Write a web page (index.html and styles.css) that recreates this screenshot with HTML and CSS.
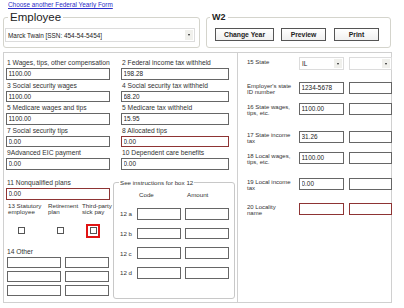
FILE: index.html
```html
<!DOCTYPE html>
<html>
<head>
<meta charset="utf-8">
<link rel="stylesheet" href="styles.css">
</head>
<body>
<div class="page">
  <div class="top"><a class="top-link" href="#">Choose another Federal Yearly Form</a></div>
  <div class="header">
    <fieldset class="group emp">
      <legend class="emp-legend">Employee</legend>
      <div class="select emp-select"><span class="select-text">Marck Twain [SSN: 454-54-5454]</span><span class="select-btn"><span class="caret"></span></span></div>
    </fieldset>
    <fieldset class="group w2">
      <legend class="w2-legend">W2</legend>
      <div class="btn-row">
        <button class="btn btn-year">Change Year</button>
        <button class="btn btn-sm">Preview</button>
        <button class="btn btn-sm btn-print">Print</button>
      </div>
    </fieldset>
  </div>
  <div class="main">
    <div class="panel left-panel">
      <div class="fields">
        <div class="field"><div class="lbl">1 Wages, tips, other compensation</div><input class="inp" value="1100.00"></div>
        <div class="field"><div class="lbl">2 Federal income tax withheld</div><input class="inp" value="198.28"></div>
        <div class="field"><div class="lbl">3 Social security wages</div><input class="inp" value="1100.00"></div>
        <div class="field"><div class="lbl">4 Social security tax withheld</div><input class="inp" value="68.20"></div>
        <div class="field"><div class="lbl">5 Medicare wages and tips</div><input class="inp" value="1100.00"></div>
        <div class="field"><div class="lbl">5 Medicare tax withheld</div><input class="inp" value="15.95"></div>
        <div class="field"><div class="lbl">7 Social security tips</div><input class="inp" value="0.00"></div>
        <div class="field"><div class="lbl">8 Allocated tips</div><input class="inp inp-red" value="0.00"></div>
        <div class="field"><div class="lbl">9Advanced EIC payment</div><input class="inp" value="0.00"></div>
        <div class="field"><div class="lbl">10 Dependent care benefits</div><input class="inp" value="0.00"></div>
      </div>
      <div class="lower">
        <div class="lower-left">
          <div class="lbl">11 Nonqualified plans</div>
          <input class="inp inp-red" value="0.00">
          <div class="checks">
            <div class="check-col"><div class="check-lbl">13 Statutory<br>employee</div><div class="check-cell cell-a"><span class="cb"></span></div></div>
            <div class="check-col"><div class="check-lbl">Retirement<br>plan</div><div class="check-cell cell-b"><span class="cb"></span></div></div>
            <div class="check-col"><div class="check-lbl">Third-party<br>sick pay</div><div class="check-cell cell-c cell-red"><span class="cb"></span></div></div>
          </div>
          <div class="lbl other-lbl">14 Other</div>
          <div class="other-grid">
            <input class="inp"><input class="inp">
            <input class="inp"><input class="inp">
            <input class="inp"><input class="inp">
          </div>
        </div>
        <fieldset class="box12">
          <legend class="box12-legend">See instructions for box 12</legend>
          <div class="b12-head"><span class="b12-spacer"></span><span class="b12-h">Code</span><span class="b12-h b12-h2">Amount</span></div>
          <div class="b12-row b12-first"><span class="b12-lbl">12 a</span><input class="inp b12-inp"><input class="inp b12-inp b12-inp2"></div>
          <div class="b12-row"><span class="b12-lbl">12 b</span><input class="inp b12-inp"><input class="inp b12-inp b12-inp2"></div>
          <div class="b12-row"><span class="b12-lbl">12 c</span><input class="inp b12-inp"><input class="inp b12-inp b12-inp2"></div>
          <div class="b12-row"><span class="b12-lbl">12 d</span><input class="inp b12-inp"><input class="inp b12-inp b12-inp2"></div>
        </fieldset>
      </div>
    </div>
    <div class="panel right-panel">
      <div class="state-grid">
        <div class="slbl slbl-state">15 State</div>
        <div class="select st-select"><span class="select-text">IL</span><span class="select-btn"><span class="caret"></span></span></div>
        <div class="select st-select"><span class="select-text"></span><span class="select-btn"><span class="caret"></span></span></div>

        <div class="slbl">Employer's state<br>ID number</div>
        <input class="inp" value="1234-5678"><input class="inp">

        <div class="slbl">16 State wages,<br>tips, etc.</div>
        <input class="inp" value="1100.00"><input class="inp">

        <div class="slbl">17 State income<br>tax</div>
        <input class="inp" value="31.26"><input class="inp">

        <div class="slbl">18 Local wages,<br>tips, etc.</div>
        <input class="inp" value="1100.00"><input class="inp">

        <div class="slbl">19 Local income<br>tax</div>
        <input class="inp" value="0.00"><input class="inp">

        <div class="slbl">20 Locality<br>name</div>
        <input class="inp inp-red"><input class="inp inp-red">
      </div>
    </div>
  </div>
</div>
</body>
</html>
```

FILE: styles.css
```css
body {
  margin: 0;
  background: #fff;
  font-family: "Liberation Sans", Arial, sans-serif;
  color: #333;
}

.page {
  width: 404px;
  height: 308px;
  overflow: hidden;
}

.top {
  height: 11px;
  box-sizing: border-box;
  padding: 1px 0 0 8px;
  line-height: 8px;
  font-size: 6.4px;
}

.top-link {
  color: #2d2dc8;
  text-decoration: underline;
}

.header {
  display: flex;
  align-items: flex-start;
  gap: 6px;
  padding-left: 3px;
}

fieldset.group {
  margin: 0;
  min-width: 0;
  box-sizing: border-box;
  border: 1px solid #d4d4cc;
  border-radius: 3px;
}

.emp {
  width: 197px;
  padding: 0 3px 5px 1px;
}

.emp-legend {
  margin-left: 3px;
  padding: 0 2px;
  font-size: 11.5px;
  line-height: 12px;
  color: #222;
}

.w2 {
  width: 185px;
  padding: 0 3px 6px 3px;
}

.w2-legend {
  padding: 0 2px;
  font-size: 9px;
  font-weight: bold;
  line-height: 12px;
  color: #222;
}

.select {
  box-sizing: border-box;
  display: flex;
  align-items: stretch;
  border: 1px solid #dcdcdc;
  background: #fff;
}

.select-text {
  flex: 1;
  padding-left: 2px;
  font-size: 6.4px;
  color: #222;
  display: flex;
  align-items: center;
  white-space: nowrap;
}

.select-btn {
  width: 8px;
  margin: 1px;
  background: #f0f0ec;
  display: flex;
  align-items: center;
  justify-content: center;
}

.caret {
  width: 0;
  height: 0;
  border-left: 1.5px solid transparent;
  border-right: 1.5px solid transparent;
  border-top: 2px solid #222;
}

.emp-select {
  margin-top: 5px;
  width: 190px;
  height: 14px;
}

.btn-row {
  display: flex;
  gap: 7px;
  margin-top: 5px;
  padding-left: 5px;
}

.btn {
  box-sizing: border-box;
  height: 13px;
  margin: 0;
  padding: 0;
  border: 1px solid #555;
  border-radius: 0;
  background: linear-gradient(#ffffff, #f0f0f0);
  font-family: "Liberation Sans", Arial, sans-serif;
  font-size: 6.8px;
  font-weight: bold;
  color: #222;
}

.btn-year { width: 59px; }
.btn-sm { width: 45px; }
.btn-print { margin-left: 1px; }

.main {
  display: flex;
  width: 389px;
  height: 251px;
  margin: 4px 0 0 3px;
}

.panel {
  box-sizing: border-box;
  border: 1px solid #d0d0d0;
}

.left-panel {
  width: 235px;
  padding: 4px 0 0 2px;
}

.right-panel {
  width: 154px;
  border-left: 0;
  padding: 4px 0 0 9px;
}

.fields {
  display: grid;
  grid-template-columns: 104px 108px;
  column-gap: 11px;
}

.lbl {
  height: 11px;
  line-height: 11px;
  padding-left: 1px;
  font-size: 6.7px;
  white-space: nowrap;
  color: #333;
}

.inp {
  display: block;
  box-sizing: border-box;
  width: 100%;
  height: 11.5px;
  margin: 0;
  padding: 0 0 0 1.5px;
  border: 1px solid #666;
  border-radius: 0;
  background: #fff;
  font-family: "Liberation Sans", Arial, sans-serif;
  font-size: 6.4px;
  color: #222;
  outline: none;
}

.inp-red {
  border-color: #8e3434;
}

.lower {
  display: flex;
  align-items: flex-start;
  margin-top: 7.5px;
}

.lower-left {
  width: 104px;
}

.checks {
  display: grid;
  grid-template-columns: 40px 34px 30px;
  margin-top: 3.5px;
  padding-left: 2px;
}

.check-lbl {
  font-size: 6.2px;
  line-height: 6px;
  height: 12px;
  white-space: nowrap;
}

.check-cell {
  box-sizing: border-box;
  width: 14px;
  height: 14px;
  margin-top: 8.5px;
  border: 2px solid transparent;
  display: flex;
  align-items: center;
  justify-content: center;
}

.cell-a { margin-left: 6px; }
.cell-b { margin-left: 5px; }
.cell-c { margin-left: 4px; }

.cell-red {
  border-color: #e01414;
}

.cb {
  box-sizing: border-box;
  width: 7px;
  height: 7px;
  border: 1px solid #555;
  background: #fff;
}

.other-lbl {
  margin-top: 8px;
}

.other-grid {
  display: grid;
  grid-template-columns: 54px 44px;
  column-gap: 4px;
  row-gap: 2.5px;
  margin-left: 1px;
}

.box12 {
  box-sizing: border-box;
  width: 122px;
  min-width: 0;
  margin: 0 0 0 3px;
  padding: 0 0 19.5px 5px;
  border: 1px solid #c8c8c8;
  border-radius: 3px;
}

.box12-legend {
  padding: 0 1px;
  font-size: 6.2px;
  line-height: 11px;
  color: #333;
}

.b12-head {
  display: flex;
  margin-top: 3px;
  line-height: 8px;
  font-size: 6.2px;
}

.b12-spacer { width: 18px; }

.b12-h {
  width: 44px;
  padding-left: 2px;
  box-sizing: border-box;
}

.b12-h2 { margin-left: 4px; }

.b12-row {
  display: flex;
  align-items: center;
  margin-top: 8.2px;
}

.b12-first { margin-top: 9px; }

.b12-lbl {
  width: 18px;
  box-sizing: border-box;
  padding-left: 1px;
  font-size: 6.2px;
}

.b12-inp {
  flex: none;
  width: 44px;
}

.b12-inp2 { margin-left: 4px; }

.state-grid {
  display: grid;
  grid-template-columns: 47px 45px 43px;
  column-gap: 5px;
  grid-template-rows: 25px 21px 28px 21px 26px 25px 12px;
  align-items: start;
}

.slbl {
  padding-top: 1px;
  font-size: 6px;
  line-height: 6.3px;
  white-space: nowrap;
  color: #333;
}

.slbl-state { padding-top: 2px; }

.st-select {
  height: 13px;
}
```
